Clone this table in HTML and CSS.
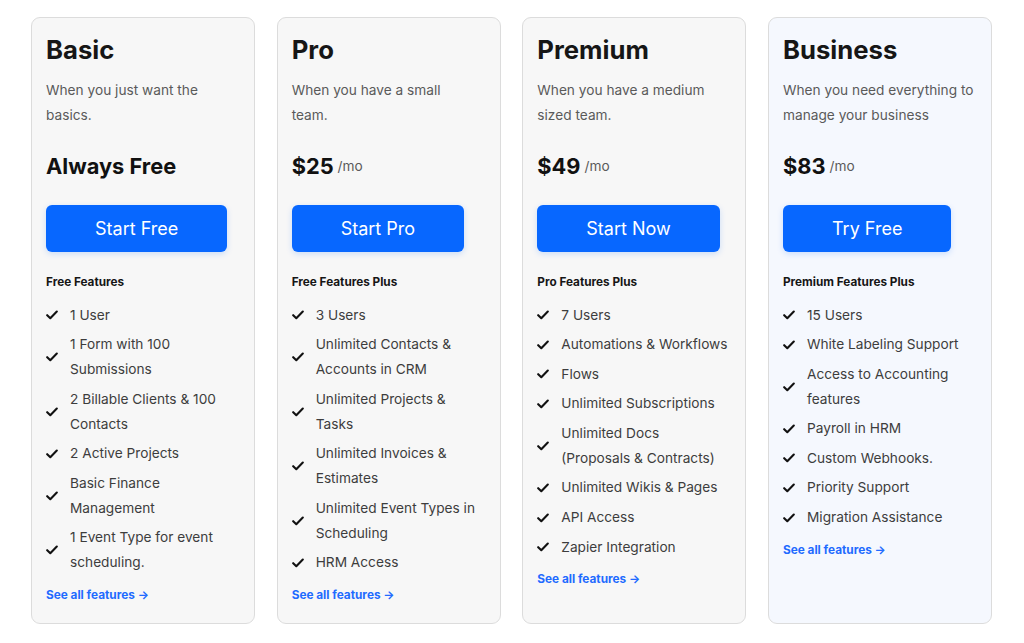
FILE: index.html
```html
<!DOCTYPE html>
<html lang="en">
<head>
<meta charset="utf-8">
<title>Pricing</title>
<link rel="stylesheet" href="styles.css">
</head>
<body>
<svg width="0" height="0" style="position:absolute">
  <defs>
    <symbol id="chk" viewBox="0 0 12 10">
      <path d="M1.2 5.2 L4.3 8.2 L10.8 1.6" fill="none" stroke="#111" stroke-width="2.1" stroke-linecap="round" stroke-linejoin="round"/>
    </symbol>
  </defs>
</svg>
<main class="plans">
  <section class="card">
    <h2 class="title">Basic</h2>
    <p class="desc">When you just want the<br>basics.</p>
    <div class="price"><span class="amount">Always Free</span></div>
    <a class="btn" href="#">Start Free</a>
    <h3 class="head">Free Features</h3>
    <ul class="features">
      <li><svg class="ic"><use href="#chk"/></svg><span>1 User</span></li>
      <li><svg class="ic"><use href="#chk"/></svg><span>1 Form with 100 Submissions</span></li>
      <li><svg class="ic"><use href="#chk"/></svg><span>2 Billable Clients &amp; 100 Contacts</span></li>
      <li><svg class="ic"><use href="#chk"/></svg><span>2 Active Projects</span></li>
      <li><svg class="ic"><use href="#chk"/></svg><span>Basic Finance Management</span></li>
      <li><svg class="ic"><use href="#chk"/></svg><span>1 Event Type for event scheduling.</span></li>
    </ul>
    <a class="more" href="#">See all features →</a>
  </section>
  <section class="card">
    <h2 class="title">Pro</h2>
    <p class="desc">When you have a small<br>team.</p>
    <div class="price"><span class="amount">$25</span><span class="per">/mo</span></div>
    <a class="btn" href="#">Start Pro</a>
    <h3 class="head">Free Features Plus</h3>
    <ul class="features">
      <li><svg class="ic"><use href="#chk"/></svg><span>3 Users</span></li>
      <li><svg class="ic"><use href="#chk"/></svg><span>Unlimited Contacts &amp; Accounts in CRM</span></li>
      <li><svg class="ic"><use href="#chk"/></svg><span>Unlimited Projects &amp; Tasks</span></li>
      <li><svg class="ic"><use href="#chk"/></svg><span>Unlimited Invoices &amp; Estimates</span></li>
      <li><svg class="ic"><use href="#chk"/></svg><span>Unlimited Event Types in Scheduling</span></li>
      <li><svg class="ic"><use href="#chk"/></svg><span>HRM Access</span></li>
    </ul>
    <a class="more" href="#">See all features →</a>
  </section>
  <section class="card">
    <h2 class="title">Premium</h2>
    <p class="desc">When you have a medium<br>sized team.</p>
    <div class="price"><span class="amount">$49</span><span class="per">/mo</span></div>
    <a class="btn" href="#">Start Now</a>
    <h3 class="head">Pro Features Plus</h3>
    <ul class="features">
      <li><svg class="ic"><use href="#chk"/></svg><span>7 Users</span></li>
      <li><svg class="ic"><use href="#chk"/></svg><span>Automations &amp; Workflows</span></li>
      <li><svg class="ic"><use href="#chk"/></svg><span>Flows</span></li>
      <li><svg class="ic"><use href="#chk"/></svg><span>Unlimited Subscriptions</span></li>
      <li><svg class="ic"><use href="#chk"/></svg><span>Unlimited Docs (Proposals &amp; Contracts)</span></li>
      <li><svg class="ic"><use href="#chk"/></svg><span>Unlimited Wikis &amp; Pages</span></li>
      <li><svg class="ic"><use href="#chk"/></svg><span>API Access</span></li>
      <li><svg class="ic"><use href="#chk"/></svg><span>Zapier Integration</span></li>
    </ul>
    <a class="more" href="#">See all features →</a>
  </section>
  <section class="card card-hl">
    <h2 class="title">Business</h2>
    <p class="desc">When you need everything to<br>manage your business</p>
    <div class="price"><span class="amount">$83</span><span class="per">/mo</span></div>
    <a class="btn" href="#">Try Free</a>
    <h3 class="head">Premium Features Plus</h3>
    <ul class="features">
      <li><svg class="ic"><use href="#chk"/></svg><span>15 Users</span></li>
      <li><svg class="ic"><use href="#chk"/></svg><span>White Labeling Support</span></li>
      <li><svg class="ic"><use href="#chk"/></svg><span>Access to Accounting features</span></li>
      <li><svg class="ic"><use href="#chk"/></svg><span>Payroll in HRM</span></li>
      <li><svg class="ic"><use href="#chk"/></svg><span>Custom Webhooks.</span></li>
      <li><svg class="ic"><use href="#chk"/></svg><span>Priority Support</span></li>
      <li><svg class="ic"><use href="#chk"/></svg><span>Migration Assistance</span></li>
    </ul>
    <a class="more" href="#">See all features →</a>
  </section>
</main>
</body>
</html>
```

FILE: styles.css
```css
* { box-sizing: border-box; }
html, body { margin: 0; padding: 0; background: #fff; }
body {
  font-family: Inter, "Noto Sans", "Liberation Sans", sans-serif;
  color: #111;
}
.plans {
  display: grid;
  grid-template-columns: repeat(4, 224px);
  column-gap: 21.67px;
  padding: 17px 0 0 31px;
  align-items: start;
}
.card {
  height: 607px;
  background: #f7f7f7;
  border: 1px solid #dcdcdc;
  border-radius: 9px;
  padding: 17px 8px 0 14px;
  display: flex;
  flex-direction: column;
  align-items: flex-start;
}
.card-hl { background: #f5f8fe; }
.title {
  margin: 0;
  font-size: 25.7px;
  line-height: 29px;
  font-weight: 700;
  color: #161616;
}
.desc {
  margin: 13.5px 0 0;
  font-size: 13.7px;
  line-height: 25px;
  color: #5a5a5a;
  white-space: nowrap;
}
.price {
  margin-top: 23.5px;
  display: flex;
  align-items: center;
  gap: 4px;
  height: 30px;
}
.amount {
  font-size: 21.8px;
  line-height: 30px;
  font-weight: 700;
  color: #111;
}
.per {
  font-size: 13.7px;
  line-height: 20px;
  color: #5a5a5a;
}
.btn {
  margin-top: 24px;
  height: 47px;
  padding: 0 49px;
  display: flex;
  align-items: center;
  justify-content: center;
  background: #0767ff;
  color: #fff;
  text-decoration: none;
  font-size: 18px;
  border-radius: 6px;
  box-shadow: 0 2px 6px rgba(7, 103, 255, 0.18);
  white-space: nowrap;
}
.head {
  margin: 21px 0 0;
  font-size: 11.75px;
  line-height: 18px;
  font-weight: 700;
  color: #161616;
}
.features {
  list-style: none;
  margin: 11.5px 0 0;
  padding: 0;
  display: flex;
  flex-direction: column;
  gap: 4.6px;
}
.features li {
  display: flex;
  align-items: center;
  font-size: 13.7px;
  line-height: 25px;
  color: #3d3d3d;
}
.features li span { max-width: 168px; }
.ic {
  width: 12px;
  height: 10px;
  flex: 0 0 12px;
  margin-right: 12px;
}
.more {
  margin-top: 10.5px;
  font-size: 11.8px;
  line-height: 18px;
  font-weight: 700;
  color: #1f6bff;
  text-decoration: none;
}
```
